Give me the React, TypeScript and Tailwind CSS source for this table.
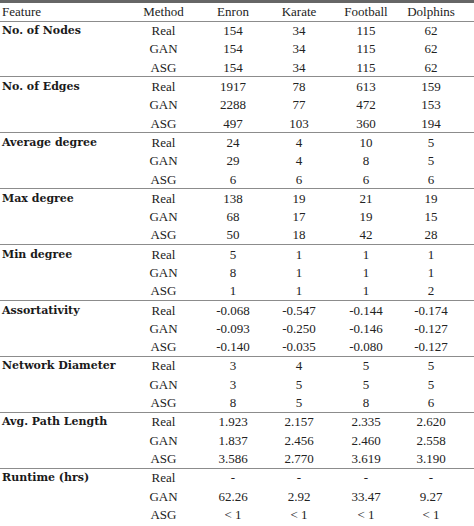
const COLUMNS = ["Enron", "Karate", "Football", "Dolphins"];

type Group = { feature: string; rows: [string, string[]][] };

const GROUPS: Group[] = [
  {
    feature: "No. of Nodes",
    rows: [
      ["Real", ["154", "34", "115", "62"]],
      ["GAN", ["154", "34", "115", "62"]],
      ["ASG", ["154", "34", "115", "62"]],
    ],
  },
  {
    feature: "No. of Edges",
    rows: [
      ["Real", ["1917", "78", "613", "159"]],
      ["GAN", ["2288", "77", "472", "153"]],
      ["ASG", ["497", "103", "360", "194"]],
    ],
  },
  {
    feature: "Average degree",
    rows: [
      ["Real", ["24", "4", "10", "5"]],
      ["GAN", ["29", "4", "8", "5"]],
      ["ASG", ["6", "6", "6", "6"]],
    ],
  },
  {
    feature: "Max degree",
    rows: [
      ["Real", ["138", "19", "21", "19"]],
      ["GAN", ["68", "17", "19", "15"]],
      ["ASG", ["50", "18", "42", "28"]],
    ],
  },
  {
    feature: "Min degree",
    rows: [
      ["Real", ["5", "1", "1", "1"]],
      ["GAN", ["8", "1", "1", "1"]],
      ["ASG", ["1", "1", "1", "2"]],
    ],
  },
  {
    feature: "Assortativity",
    rows: [
      ["Real", ["-0.068", "-0.547", "-0.144", "-0.174"]],
      ["GAN", ["-0.093", "-0.250", "-0.146", "-0.127"]],
      ["ASG", ["-0.140", "-0.035", "-0.080", "-0.127"]],
    ],
  },
  {
    feature: "Network Diameter",
    rows: [
      ["Real", ["3", "4", "5", "5"]],
      ["GAN", ["3", "5", "5", "5"]],
      ["ASG", ["8", "5", "8", "6"]],
    ],
  },
  {
    feature: "Avg. Path Length",
    rows: [
      ["Real", ["1.923", "2.157", "2.335", "2.620"]],
      ["GAN", ["1.837", "2.456", "2.460", "2.558"]],
      ["ASG", ["3.586", "2.770", "3.619", "3.190"]],
    ],
  },
  {
    feature: "Runtime (hrs)",
    rows: [
      ["Real", ["-", "-", "-", "-"]],
      ["GAN", ["62.26", "2.92", "33.47", "9.27"]],
      ["ASG", ["< 1", "< 1", "< 1", "< 1"]],
    ],
  },
];

// feature | method | enron | karate | football | dolphins | rest
const GRID = "grid grid-cols-[128px_71px_68px_64px_70px_60px_1fr] items-center";

function GroupBlock({ group }: { group: Group }) {
  return (
    <div className="border-t-[1.5px] border-[#8c8c8c]">
      {group.rows.map(([method, values], i) => (
        <div key={method} className={`${GRID} h-[18.3px]`}>
          <div className="pl-[2px] font-['DejaVu_Serif',serif] text-[11px] font-bold text-[#1a1a1a] whitespace-nowrap">
            {i === 0 ? group.feature : ""}
          </div>
          <div className="text-center">{method}</div>
          {values.map((v, j) => (
            <div key={j} className="text-center whitespace-nowrap">
              {v}
            </div>
          ))}
          <div />
        </div>
      ))}
    </div>
  );
}

export default function App() {
  return (
    <div className="w-[474px] h-[526px] bg-white font-['Liberation_Serif',serif] text-[13px] leading-none text-[#222] overflow-hidden">
      <div className="border-t-[3px] border-[#666]">
        <div className={`${GRID} h-[17.5px]`}>
          <div className="pl-[2px]">Feature</div>
          <div className="text-center">Method</div>
          {COLUMNS.map((c) => (
            <div key={c} className="text-center">
              {c}
            </div>
          ))}
          <div />
        </div>
      </div>
      {GROUPS.map((g) => (
        <GroupBlock key={g.feature} group={g} />
      ))}
    </div>
  );
}
